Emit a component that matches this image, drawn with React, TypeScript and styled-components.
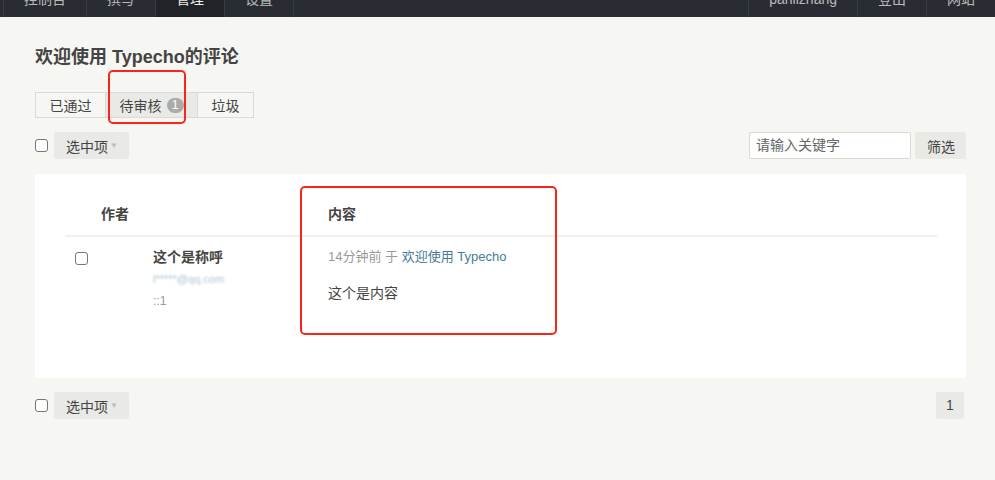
import React from 'react'
import styled, { createGlobalStyle } from 'styled-components';

const GlobalStyle = createGlobalStyle`
	html, body {
		margin: 0;
		padding: 0;
		background: #F6F6F3;
		font-family: 'Liberation Sans', 'Noto Sans CJK SC', sans-serif;
		font-size: 14px;
		color: #444;
		overflow: hidden;
	}
`;

const Nav = styled.div`
	display: flex;
	height: 36px;
	margin-top: -19px;
	padding-left: 3px;
	background: #292D33;
	line-height: 36px;
`;

const NavGroup = styled.div`
	display: flex;
`;

const Spacer = styled.div`
	flex: 1;
	border-left: 1px solid #383D45;
`;

const NavItem = styled.div<{ $active?: boolean }>`
	padding: 0 20px;
	border-left: 1px solid #383D45;
	color: ${p => p.$active ? '#EEE' : '#BBB'};
	background: ${p => p.$active ? '#202328' : 'transparent'};
	font-size: 14px;
	white-space: nowrap;
`;

const Main = styled.div`
	padding: 0 29px 0 35px;
`;

const Title = styled.h2`
	margin: 30px 0 25px;
	font-size: 18px;
	font-weight: bold;
	line-height: 20px;
	color: #444;
`;

const Tabs = styled.div`
	display: flex;
	margin: 0 0 14px 1px;
`;

const Tab = styled.div<{ $active?: boolean }>`
	position: relative;
	display: flex;
	align-items: center;
	gap: 5px;
	height: 24px;
	padding: 0 13.5px;
	border: 1px solid #D9D9D6;
	margin-left: -1px;
	background: ${p => p.$active ? '#E9E9E6' : '#F6F6F3'};
	color: #444;
	font-size: 14px;
`;

const Badge = styled.span`
	display: inline-flex;
	align-items: center;
	justify-content: center;
	width: 17px;
	height: 15px;
	border-radius: 8px;
	background: #AAA;
	color: #FFF;
	font-size: 12px;
`;

const Mark = styled.div<{ $l: number; $t: number; $w: number; $h: number }>`
	position: absolute;
	left: ${p => p.$l}px;
	top: ${p => p.$t}px;
	width: ${p => p.$w}px;
	height: ${p => p.$h}px;
	box-sizing: border-box;
	border: 2px solid #F7261B;
	border-radius: 5px;
	pointer-events: none;
`;

const Toolbar = styled.div`
	display: flex;
	align-items: center;
	height: 27px;
`;

const Check = styled.input.attrs({ type: 'checkbox' })`
	appearance: none;
	box-sizing: border-box;
	width: 13px;
	height: 13px;
	margin: 0;
	border: 1px solid #777;
	border-radius: 3px;
	background: #FFF;
`;

const Button = styled.div`
	display: flex;
	align-items: center;
	height: 27px;
	padding: 0 11px 0 12px;
	border-radius: 2px;
	background: #E9E9E6;
	color: #444;
	font-size: 14px;
`;

const Caret = styled.span`
	margin-left: 2px;
	color: #BBB;
	font-size: 8px;
`;

const Search = styled.div`
	display: flex;
	gap: 4px;
	margin-left: auto;
`;

const Input = styled.div`
	box-sizing: border-box;
	width: 162px;
	height: 27px;
	padding: 0 6px;
	border: 1px solid #D9D9D6;
	border-radius: 2px;
	background: #FFF;
	color: #666;
	font-size: 14px;
	line-height: 25px;
`;

const Panel = styled.div`
	position: relative;
	margin-top: 15px;
	padding: 20px 29px 67px 30px;
	background: #FFF;
`;

const Row = styled.div<{ $head?: boolean }>`
	display: grid;
	grid-template-columns: 26px 52px 175px 1fr;
	border-bottom: ${p => p.$head ? '2px solid #F0F0EC' : 'none'};
`;

const HeadCell = styled.div`
	height: 41px;
	padding-left: 10px;
	font-weight: bold;
	line-height: 41px;
	color: #444;
`;

const Cell = styled.div`
	padding: 10px 0 0 10px;
	line-height: 20px;
`;

const CheckCell = styled.div`
	padding: 15px 0 0 10px;
`;

const Name = styled.div`
	font-weight: bold;
	color: #444;
`;

const Email = styled.div`
	margin-top: 2px;
	color: #467B96;
	font-size: 11px;
	opacity: 0.45;
	filter: blur(1.2px);
`;

const Ip = styled.div`
	margin-top: 2px;
	color: #999;
	font-size: 12px;
`;

const Meta = styled.div`
	color: #999;
	font-size: 13px;
`;

const Link = styled.a`
	color: #467B96;
	text-decoration: none;
`;

const Body = styled.div`
	margin-top: 16px;
	color: #444;
`;

const Footer = styled(Toolbar)`
	margin-top: 14px;
`;

const Page = styled.div`
	margin-left: auto;
	margin-right: 2px;
	width: 28px;
	height: 27px;
	border-radius: 2px;
	background: #E9E9E6;
	color: #444;
	text-align: center;
	line-height: 27px;
`;

const Gap = styled.span`
	width: 6px;
`;

export default function App() {
	return (
		<>
			<GlobalStyle />
			<Nav>
				<NavGroup>
					<NavItem>控制台</NavItem>
					<NavItem>撰写</NavItem>
					<NavItem $active>管理</NavItem>
					<NavItem>设置</NavItem>
				</NavGroup>
				<Spacer />
				<NavGroup>
					<NavItem>panlizhang</NavItem>
					<NavItem>登出</NavItem>
					<NavItem>网站</NavItem>
				</NavGroup>
			</Nav>
			<Main>
				<Title>欢迎使用 Typecho的评论</Title>
				<Tabs>
					<Tab>已通过</Tab>
					<Tab $active>
						待审核 <Badge>1</Badge>
						<Mark $l={2} $t={-23} $w={78} $h={54} />
					</Tab>
					<Tab>垃圾</Tab>
				</Tabs>
				<Toolbar>
					<Check />
					<Gap />
					<Button>选中项<Caret>▼</Caret></Button>
					<Search>
						<Input>请输入关键字</Input>
						<Button>筛选</Button>
					</Search>
				</Toolbar>
				<Panel>
					<Row $head>
						<HeadCell />
						<HeadCell style={{ gridColumn: 'span 2' }}>作者</HeadCell>
						<HeadCell>内容</HeadCell>
					</Row>
					<Row>
						<CheckCell><Check /></CheckCell>
						<Cell />
						<Cell>
							<Name>这个是称呼</Name>
							<Email>l*****@qq.com</Email>
							<Ip>::1</Ip>
						</Cell>
						<Cell>
							<Meta>14分钟前 于 <Link>欢迎使用 Typecho</Link></Meta>
							<Body>这个是内容</Body>
						</Cell>
					</Row>
					<Mark $l={265} $t={12} $w={257} $h={149} />
				</Panel>
				<Footer>
					<Check />
					<Gap />
					<Button>选中项<Caret>▼</Caret></Button>
					<Page>1</Page>
				</Footer>
			</Main>
		</>
	);
}
